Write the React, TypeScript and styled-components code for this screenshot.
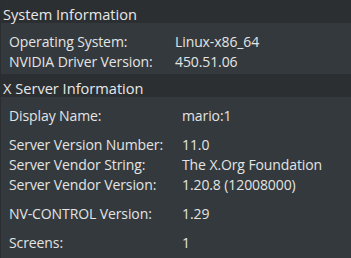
import React from "react";
import styled, { createGlobalStyle } from "styled-components";

const GlobalStyle = createGlobalStyle`
  html, body {
    margin: 0;
    padding: 0;
    background: #33393c;
  }
  body {
    font-family: "Open Sans", "DejaVu Sans", sans-serif;
    -webkit-font-smoothing: antialiased;
  }
`;

const Panel = styled.div`
  width: 351px;
  height: 258px;
  overflow: hidden;
  background: #33393c;
  border-left: 1px solid #2a2e31;
  box-sizing: border-box;
  color: #e4e4e4;
  font-size: 14px;
`;

const SectionHeader = styled.div`
  height: 23px;
  box-sizing: border-box;
  padding: 6px 0 0 2px;
  line-height: 17px;
  background: #2b2f32;
  font-size: 14.6px;
  color: #e8e8e8;
  white-space: nowrap;
`;

const Group = styled.div<{ $bottom: number }>`
  display: flex;
  flex-direction: column;
  gap: 9px;
  padding: 8px 0 ${(p) => p.$bottom}px 8px;
`;

const Block = styled.div<{ $labelWidth: number }>`
  display: grid;
  grid-template-columns: ${(p) => p.$labelWidth}px 1fr;
  grid-auto-rows: 20px;
  align-items: center;
  white-space: nowrap;
  letter-spacing: -0.1px;
`;

const Label = styled.span``;
const Value = styled.span``;

type Row = [string, string];

const systemRows: Row[] = [
  ["Operating System:", "Linux-x86_64"],
  ["NVIDIA Driver Version:", "450.51.06"],
];

const xBlocks: Row[][] = [
  [["Display Name:", "mario:1"]],
  [
    ["Server Version Number:", "11.0"],
    ["Server Vendor String:", "The X.Org Foundation"],
    ["Server Vendor Version:", "1.20.8 (12008000)"],
  ],
  [["NV-CONTROL Version:", "1.29"]],
  [["Screens:", "1"]],
];

function Rows({ rows, labelWidth }: { rows: Row[]; labelWidth: number }) {
  return (
    <Block $labelWidth={labelWidth}>
      {rows.map(([label, value]) => (
        <React.Fragment key={label}>
          <Label>{label}</Label>
          <Value>{value}</Value>
        </React.Fragment>
      ))}
    </Block>
  );
}

export default function App() {
  return (
    <>
      <GlobalStyle />
      <Panel>
        <SectionHeader>System Information</SectionHeader>
        <Group $bottom={3}>
          <Rows rows={systemRows} labelWidth={166} />
        </Group>
        <SectionHeader>X Server Information</SectionHeader>
        <Group $bottom={0}>
          {xBlocks.map((rows, i) => (
            <Rows key={i} rows={rows} labelWidth={173} />
          ))}
        </Group>
      </Panel>
    </>
  );
}
